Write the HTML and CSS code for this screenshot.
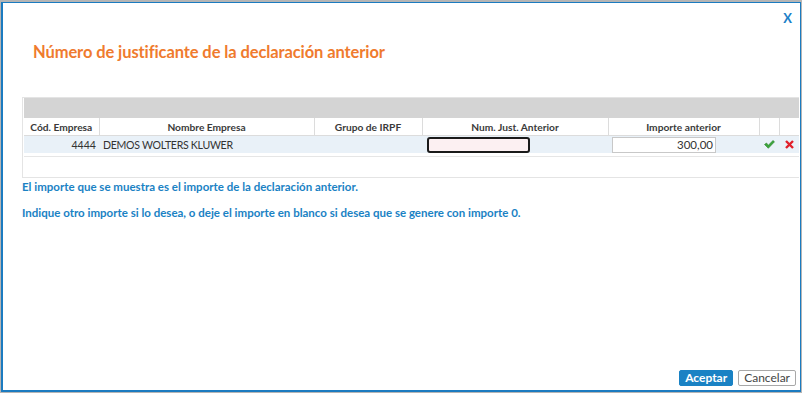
FILE: index.html
```html
<!DOCTYPE html>
<html lang="es">
<head>
<meta charset="utf-8">
<title>Número de justificante</title>
<link rel="stylesheet" href="styles.css">
</head>
<body>
<div class="dialog">
  <div class="topbar"><span class="close">X</span></div>
  <h1 class="title">Número de justificante de la declaración anterior</h1>
  <div class="grid">
    <div class="band"></div>
    <div class="rows">
      <table class="tbl">
        <colgroup>
          <col class="c1"><col class="c2"><col class="c3"><col class="c4"><col class="c5"><col class="c6"><col class="c7">
        </colgroup>
        <thead>
          <tr>
            <th>Cód. Empresa</th>
            <th>Nombre Empresa</th>
            <th>Grupo de IRPF</th>
            <th>Num. Just. Anterior</th>
            <th>Importe anterior</th>
            <th></th>
            <th></th>
          </tr>
        </thead>
        <tbody>
          <tr>
            <td class="num">4444</td>
            <td>DEMOS WOLTERS KLUWER</td>
            <td></td>
            <td><div class="in-just"></div></td>
            <td><div class="in-imp">300,00</div></td>
            <td class="ico"><svg width="11" height="9" viewBox="0 0 11 9"><path d="M0.5 4.5 L2.5 3 L4.3 5.2 L9 0.5 L10.5 1.8 L4.3 8.3 Z" fill="#3aa53a" stroke="#2a7f2a" stroke-width="0.6"/></svg></td>
            <td class="ico"><svg width="9" height="9" viewBox="0 0 9 9"><path d="M1 1 L8 8 M8 1 L1 8" stroke="#e0202a" stroke-width="2.4"/></svg></td>
          </tr>
        </tbody>
      </table>
    </div>
  </div>
  <p class="msg first">El importe que se muestra es el importe de la declaración anterior.</p>
  <p class="msg">Indique otro importe si lo desea, o deje el importe en blanco si desea que se genere con importe 0.</p>
  <div class="footer">
    <button class="btn primary">Aceptar</button>
    <button class="btn secondary">Cancelar</button>
  </div>
</div>
</body>
</html>
```

FILE: styles.css
```css
html, body {
  margin: 0;
  padding: 0;
}
body {
  background: #b5b5b5;
  font-family: "Lato", "Open Sans", sans-serif;
  width: 802px;
  height: 393px;
  overflow: hidden;
}
.dialog {
  margin: 2px 0 0 1px;
  width: 797px;
  height: 387px;
  background: #fff;
  border: 1px solid #1b7bc0;
  border-left-width: 2px;
  border-bottom-width: 2px;
  display: flex;
  flex-direction: column;
}
.topbar {
  display: flex;
  justify-content: flex-end;
  padding: 8px 8px 0 0;
  height: 20px;
}
.close {
  color: #1b80c8;
  font-weight: 700;
  font-size: 13px;
  line-height: 14px;
}
.title {
  margin: 11px 0 0 30px;
  font-size: 16.5px;
  line-height: 20px;
  font-weight: 700;
  color: #ef7b2e;
  letter-spacing: -0.1px;
}
.grid {
  margin: 35px 0 0 19px;
  width: 777px;
  height: 81px;
  border: 1px solid #e4e4e4;
  border-right: none;
  box-sizing: border-box;
}
.band {
  height: 20px;
  margin-left: 1px;
  background: #d4d4d4;
}
.rows {
  margin-left: 1px;
  padding-bottom: 3px;
  border-bottom: 1px solid #e6e6e6;
}
.tbl {
  border-collapse: collapse;
  table-layout: fixed;
  width: 775px;
  color: #333;
}
.c1 { width: 75px; }
.c2 { width: 215px; }
.c3 { width: 108px; }
.c4 { width: 186px; }
.c5 { width: 151px; }
.c6 { width: 20px; }
.c7 { width: 20px; }
.tbl th {
  height: 17px;
  padding: 0;
  font-size: 10.2px;
  font-weight: 700;
  border-left: 1px solid #dcdcdc;
  border-bottom: 1px solid #dcdcdc;
  text-align: center;
  color: #3a3a3a;
}
.tbl th:first-child { border-left: none; }
.tbl td {
  height: 17px;
  padding: 0 4px;
  background: #e9f1f8;
  white-space: nowrap;
  font-size: 10.6px;
  letter-spacing: -0.3px;
  color: #333;
}
.tbl td.num { text-align: right; padding-right: 3px; letter-spacing: 0; }
.tbl td.ico { padding: 0; text-align: center; }
.tbl td.ico svg { display: block; margin: 0 auto; }
.in-just {
  width: 99px;
  height: 12px;
  border: 2px solid #1a1a1a;
  border-radius: 3px;
  background: #fcf0f2;
  margin-left: 1px;
}
.in-imp {
  width: 100px;
  height: 14px;
  border: 1px solid #c8c8c8;
  background: #fff;
  text-align: right;
  font-size: 11.5px;
  letter-spacing: 0;
  line-height: 14px;
  padding-right: 2px;
  box-sizing: content-box;
}
.msg {
  margin: 0 0 0 19px;
  font-size: 11.5px;
  font-weight: 700;
  color: #1a82c4;
  line-height: 14px;
}
.msg.first { margin-top: 2px; }
.msg + .msg { margin-top: 12px; }
.footer {
  margin-top: auto;
  display: flex;
  justify-content: flex-end;
  gap: 5px;
  padding: 0 4px 4px 0;
}
.btn {
  font-family: inherit;
  font-size: 12px;
  height: 16px;
  line-height: 14px;
  padding: 0 5px;
  border-radius: 2px;
  cursor: pointer;
}
.primary {
  background: #1a82c4;
  color: #fff;
  border: 1px solid #1a82c4;
  font-weight: 700;
}
.secondary {
  background: #fff;
  color: #444;
  border: 1px solid #a8a8a8;
}
```
